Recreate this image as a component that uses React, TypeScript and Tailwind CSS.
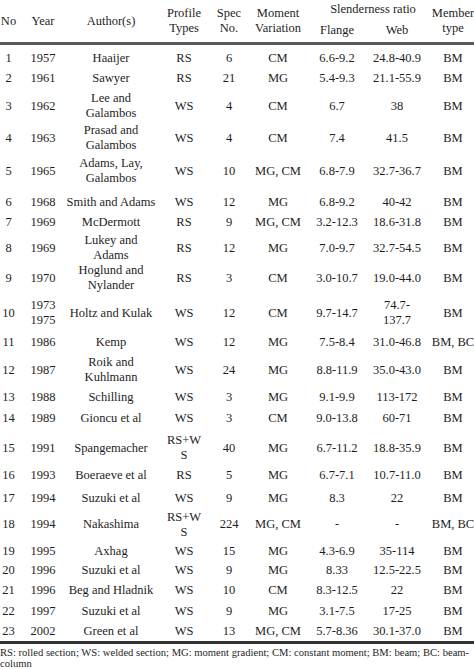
import React from 'react'

type Row = {
  no: string
  year: React.ReactNode
  author: React.ReactNode
  profile: React.ReactNode
  spec: string
  moment: string
  flange: string
  web: React.ReactNode
  member: string
  cls: string
}

const cols = 'grid grid-cols-[17px_52px_84px_62px_28px_70px_48px_72px_40px]'

const two = (a: string, b: string) => (
  <>
    {a}
    <br />
    {b}
  </>
)

const rows: Row[] = [
  { no: '1', year: '1957', author: 'Haaijer', profile: 'RS', spec: '6', moment: 'CM', flange: '6.6-9.2', web: '24.8-40.9', member: 'BM', cls: 'h-[23px] pt-[3px]' },
  { no: '2', year: '1961', author: 'Sawyer', profile: 'RS', spec: '21', moment: 'MG', flange: '5.4-9.3', web: '21.1-55.9', member: 'BM', cls: 'h-[23px] pb-[3px]' },
  { no: '3', year: '1962', author: two('Lee and', 'Galambos'), profile: 'WS', spec: '4', moment: 'CM', flange: '6.7', web: '38', member: 'BM', cls: 'h-[30px]' },
  { no: '4', year: '1963', author: two('Prasad and', 'Galambos'), profile: 'WS', spec: '4', moment: 'CM', flange: '7.4', web: '41.5', member: 'BM', cls: 'h-[34px]' },
  { no: '5', year: '1965', author: two('Adams, Lay,', 'Galambos'), profile: 'WS', spec: '10', moment: 'MG, CM', flange: '6.8-7.9', web: '32.7-36.7', member: 'BM', cls: 'h-[32px]' },
  { no: '6', year: '1968', author: 'Smith and Adams', profile: 'WS', spec: '12', moment: 'MG', flange: '6.8-9.2', web: '40-42', member: 'BM', cls: 'h-[25px] pt-[5px]' },
  { no: '7', year: '1969', author: 'McDermott', profile: 'RS', spec: '9', moment: 'MG, CM', flange: '3.2-12.3', web: '18.6-31.8', member: 'BM', cls: 'h-[21px]' },
  { no: '8', year: '1969', author: two('Lukey and', 'Adams'), profile: 'RS', spec: '12', moment: 'MG', flange: '7.0-9.7', web: '32.7-54.5', member: 'BM', cls: 'h-[30px]' },
  { no: '9', year: '1970', author: two('Hoglund and', 'Nylander'), profile: 'RS', spec: '3', moment: 'CM', flange: '3.0-10.7', web: '19.0-44.0', member: 'BM', cls: 'h-[33px] pb-[3px]' },
  { no: '10', year: two('1973', '1975'), author: 'Holtz and Kulak', profile: 'WS', spec: '12', moment: 'CM', flange: '9.7-14.7', web: two('74.7-', '137.7'), member: 'BM', cls: 'h-[34px]' },
  { no: '11', year: '1986', author: 'Kemp', profile: 'WS', spec: '12', moment: 'MG', flange: '7.5-8.4', web: '31.0-46.8', member: 'BM, BC', cls: 'h-[25px]' },
  { no: '12', year: '1987', author: two('Roik and', 'Kuhlmann'), profile: 'WS', spec: '24', moment: 'MG', flange: '8.8-11.9', web: '35.0-43.0', member: 'BM', cls: 'h-[30px]' },
  { no: '13', year: '1988', author: 'Schilling', profile: 'WS', spec: '3', moment: 'MG', flange: '9.1-9.9', web: '113-172', member: 'BM', cls: 'h-[22px] pt-[2px]' },
  { no: '14', year: '1989', author: 'Gioncu et al', profile: 'WS', spec: '3', moment: 'CM', flange: '9.0-13.8', web: '60-71', member: 'BM', cls: 'h-[26px] pb-[3px]' },
  { no: '15', year: '1991', author: 'Spangemacher', profile: two('RS+W', 'S'), spec: '40', moment: 'MG', flange: '6.7-11.2', web: '18.8-35.9', member: 'BM', cls: 'h-[30px]' },
  { no: '16', year: '1993', author: 'Boeraeve et al', profile: 'RS', spec: '5', moment: 'MG', flange: '6.7-7.1', web: '10.7-11.0', member: 'BM', cls: 'h-[24px]' },
  { no: '17', year: '1994', author: 'Suzuki et al', profile: 'WS', spec: '9', moment: 'MG', flange: '8.3', web: '22', member: 'BM', cls: 'h-[22px]' },
  { no: '18', year: '1994', author: 'Nakashima', profile: two('RS+W', 'S'), spec: '224', moment: 'MG, CM', flange: '-', web: '-', member: 'BM, BC', cls: 'h-[31px]' },
  { no: '19', year: '1995', author: 'Axhag', profile: 'WS', spec: '15', moment: 'MG', flange: '4.3-6.9', web: '35-114', member: 'BM', cls: 'h-[20px] pt-[2px]' },
  { no: '20', year: '1996', author: 'Suzuki et al', profile: 'WS', spec: '9', moment: 'MG', flange: '8.33', web: '12.5-22.5', member: 'BM', cls: 'h-[20px]' },
  { no: '21', year: '1996', author: 'Beg and Hladnik', profile: 'WS', spec: '10', moment: 'CM', flange: '8.3-12.5', web: '22', member: 'BM', cls: 'h-[21px]' },
  { no: '22', year: '1997', author: 'Suzuki et al', profile: 'WS', spec: '9', moment: 'MG', flange: '3.1-7.5', web: '17-25', member: 'BM', cls: 'h-[21px]' },
  { no: '23', year: '2002', author: 'Green et al', profile: 'WS', spec: '13', moment: 'MG, CM', flange: '5.7-8.36', web: '30.1-37.0', member: 'BM', cls: 'h-[19px]' },
]

function Cell({ children }: { children: React.ReactNode }) {
  return (
    <div className="flex items-center justify-center whitespace-nowrap text-center leading-[15px]">
      {children}
    </div>
  )
}

export default function App() {
  return (
    <div className="w-[474px] h-[669px] overflow-hidden bg-white font-['Liberation_Serif','Times_New_Roman',serif] text-[12.5px] text-[#1e1e1e]">
      {/* header */}
      <div className={`${cols} grid-rows-[18px_24px] h-[42px] border-b-[3px] border-[#5a5a5a] box-content`}>
        <div className="row-span-2 flex items-center justify-center">No</div>
        <div className="row-span-2 flex items-center justify-center">Year</div>
        <div className="row-span-2 flex items-center justify-center">Author(s)</div>
        <div className="row-span-2 flex items-center justify-center text-center leading-[15px]">
          Profile
          <br />
          Types
        </div>
        <div className="row-span-2 flex items-center justify-center text-center leading-[15px]">
          Spec
          <br />
          No.
        </div>
        <div className="row-span-2 flex items-center justify-center text-center leading-[15px]">
          Moment
          <br />
          Variation
        </div>
        <div className="col-span-2 flex items-center justify-center whitespace-nowrap">Slenderness ratio</div>
        <div className="row-span-2 flex items-center justify-center text-center leading-[15px] whitespace-nowrap">
          Member
          <br />
          type
        </div>
        <div className="flex items-center justify-center">Flange</div>
        <div className="flex items-center justify-center">Web</div>
      </div>

      {/* body */}
      <div className="border-b-[3px] border-[#333]">
        {rows.map((r) => (
          <div key={r.no} className={`${cols} ${r.cls}`}>
            <Cell>{r.no}</Cell>
            <Cell>{r.year}</Cell>
            <Cell>{r.author}</Cell>
            <Cell>{r.profile}</Cell>
            <Cell>{r.spec}</Cell>
            <Cell>{r.moment}</Cell>
            <Cell>{r.flange}</Cell>
            <Cell>{r.web}</Cell>
            <Cell>{r.member}</Cell>
          </div>
        ))}
      </div>

      <p className="pt-[3px] text-[10.6px] leading-[11px] whitespace-nowrap">
        RS: rolled section; WS: welded section; MG: moment gradient; CM: constant moment; BM: beam; BC: beam-
        <br />
        column
      </p>
    </div>
  )
}
